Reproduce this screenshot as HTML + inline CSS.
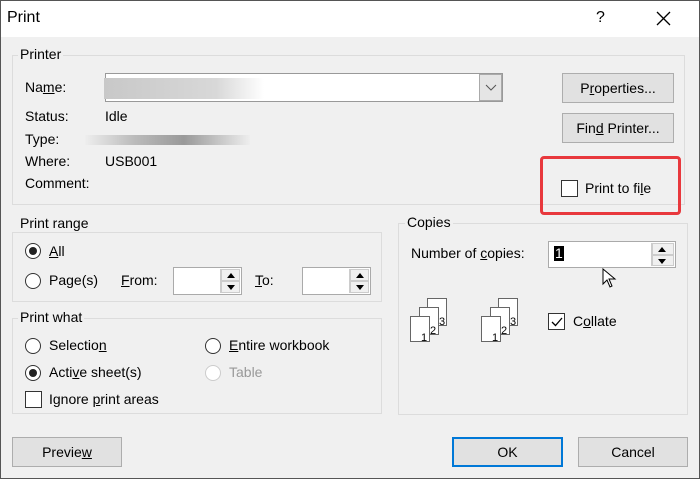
<!DOCTYPE html>
<html><head><style>
*{box-sizing:border-box;margin:0;padding:0}
body{width:700px;height:479px;background:#f0f0f0;font-family:"Liberation Sans",sans-serif;font-size:14px;color:#000;position:relative;overflow:hidden}
.a{position:absolute;white-space:nowrap}
.frame{position:absolute;left:0;top:0;width:700px;height:479px;border:1px solid #555}
.title{position:absolute;left:1px;top:1px;width:698px;height:36px;background:#fff}
.grp{position:absolute;border:1px solid #dcdcdc}
.gl{position:absolute;background:#f0f0f0;padding:0 2px}
.btn{position:absolute;background:#e1e1e1;border:1px solid #adadad;text-align:center;line-height:28px}
.rad{position:absolute;width:16px;height:16px;border:1px solid #333;border-radius:50%;background:#fff}
.rad.on::after{content:"";position:absolute;left:3px;top:3px;width:8px;height:8px;border-radius:50%;background:#222}
.chk{position:absolute;width:17px;height:17px;border:1px solid #333;background:#fff}
.inp{position:absolute;background:#fff;border:1px solid #7a7a7a}
.spin{position:absolute;right:1px;top:1px;bottom:1px;width:20px;border-left:1px solid #ccc;background:#f0f0f0}
.spin div{height:50%;border:1px solid #ccc;position:relative}
.spin .u::after{content:"";position:absolute;left:5px;top:3px;border:4px solid transparent;border-bottom:5px solid #000;border-top:0}
.spin .d::after{content:"";position:absolute;left:5px;top:3px;border:4px solid transparent;border-top:5px solid #000;border-bottom:0}
u{text-decoration:underline}
</style></head><body>
<div class="frame"></div>
<div class="title"></div>
<div class="a" style="left:7px;top:9px;font-size:16px">Print</div>
<div class="a" style="left:596px;top:9px;font-size:16px">?</div>
<svg class="a" style="left:656px;top:11px" width="15" height="15"><path d="M1 1L14 14M14 1L1 14" stroke="#000" stroke-width="1.3"/></svg>

<div class="grp" style="left:12px;top:55px;width:673px;height:150px"></div>
<div class="gl" style="left:18px;top:46px">Printer</div>
<div class="a" style="left:25px;top:79px">Na<u>m</u>e:</div>
<div class="inp" style="left:105px;top:73px;width:398px;height:29px;border-color:#999"></div>
<div class="a" style="left:104px;top:78px;width:160px;height:21px;background:linear-gradient(90deg,#c8c8c8,#d8d8d8 70%,#fff)"></div>
<div class="a" style="left:479px;top:74px;width:23px;height:27px;background:#e5e5e5;border:1px solid #aaa"></div>
<svg class="a" style="left:485px;top:84px" width="12" height="8"><path d="M1 1L6 6L11 1" stroke="#555" fill="none"/></svg>
<div class="a" style="left:25px;top:108px">Status:</div><div class="a" style="left:105px;top:108px">Idle</div>
<div class="a" style="left:25px;top:131px">Type:</div>
<div class="a" style="left:85px;top:135px;width:165px;height:10px;background:linear-gradient(90deg,#eee,#bbb 30%,#999 60%,#eee)"></div>
<div class="a" style="left:25px;top:153px">Where:</div><div class="a" style="left:105px;top:153px">USB001</div>
<div class="a" style="left:25px;top:175px">Comment:</div>
<div class="btn" style="left:562px;top:73px;width:112px;height:30px">P<u>r</u>operties...</div>
<div class="btn" style="left:562px;top:113px;width:112px;height:30px">Fin<u>d</u> Printer...</div>
<div class="a" style="left:540px;top:156px;width:141px;height:59px;border:3px solid #e8383d;border-radius:4px"></div>
<div class="chk" style="left:561px;top:180px"></div>
<div class="a" style="left:585px;top:180px">Print to fi<u>l</u>e</div>

<div class="grp" style="left:12px;top:232px;width:370px;height:70px"></div>
<div class="gl" style="left:18px;top:215px">Print range</div>
<div class="rad on" style="left:25px;top:243px"></div><div class="a" style="left:49px;top:243px"><u>A</u>ll</div>
<div class="rad" style="left:25px;top:273px"></div><div class="a" style="left:49px;top:272px">Pa<u>g</u>e(s)</div>
<div class="a" style="left:121px;top:272px"><u>F</u>rom:</div>
<div class="inp" style="left:173px;top:267px;width:69px;height:28px;border-color:#aaa"><div class="spin"><div class="u"></div><div class="d"></div></div></div>
<div class="a" style="left:255px;top:272px"><u>T</u>o:</div>
<div class="inp" style="left:302px;top:267px;width:69px;height:28px;border-color:#aaa"><div class="spin"><div class="u"></div><div class="d"></div></div></div>

<div class="grp" style="left:12px;top:318px;width:370px;height:96px"></div>
<div class="gl" style="left:18px;top:309px">Print what</div>
<div class="rad" style="left:25px;top:338px"></div><div class="a" style="left:49px;top:337px">Selectio<u>n</u></div>
<div class="rad on" style="left:25px;top:365px"></div><div class="a" style="left:49px;top:364px">Acti<u>v</u>e sheet(s)</div>
<div class="chk" style="left:25px;top:391px"></div><div class="a" style="left:49px;top:391px">Ignore <u>p</u>rint areas</div>
<div class="rad" style="left:205px;top:338px"></div><div class="a" style="left:229px;top:337px"><u>E</u>ntire workbook</div>
<div class="rad" style="left:205px;top:365px;border-color:#ccc"></div><div class="a" style="left:229px;top:364px;color:#999">Table</div>

<div class="grp" style="left:398px;top:223px;width:290px;height:192px"></div>
<div class="gl" style="left:405px;top:214px">Copies</div>
<div class="a" style="left:411px;top:245px">Number of <u>c</u>opies:</div>
<div class="inp" style="left:548px;top:241px;width:128px;height:27px;border-color:#aaa"><span class="a" style="left:5px;top:4px;background:#000;color:#fff;line-height:15px;padding:0 1px">1</span><div class="spin" style="width:23px"><div class="u"></div><div class="d"></div></div></div>
<svg class="a" style="left:602px;top:268px" width="16" height="22"><path d="M1 1L1 16L5 12L8 19L10 18L7 11L13 11Z" fill="#fff" stroke="#000"/></svg>
<svg class="a" style="left:409px;top:297px" width="42" height="48">
<g stroke="#666" fill="#fff">
<rect x="18.5" y="1.5" width="19" height="27"/><rect x="10.5" y="10.5" width="19" height="27"/><rect x="1.5" y="19.5" width="19" height="25"/></g>
<text x="30" y="28" font-family="Liberation Sans" font-size="11">3</text><text x="21" y="37" font-family="Liberation Sans" font-size="11">2</text><text x="12" y="44" font-family="Liberation Sans" font-size="11">1</text></svg>
<svg class="a" style="left:480px;top:297px" width="42" height="48">
<g stroke="#666" fill="#fff">
<rect x="18.5" y="1.5" width="19" height="27"/><rect x="10.5" y="10.5" width="19" height="27"/><rect x="1.5" y="19.5" width="19" height="25"/></g>
<text x="30" y="28" font-family="Liberation Sans" font-size="11">3</text><text x="21" y="37" font-family="Liberation Sans" font-size="11">2</text><text x="12" y="44" font-family="Liberation Sans" font-size="11">1</text></svg>
<div class="chk" style="left:548px;top:313px"></div>
<svg class="a" style="left:550px;top:315px" width="14" height="14"><path d="M2 7L5.5 10.5L12 3" stroke="#000" fill="none" stroke-width="1.3"/></svg>
<div class="a" style="left:573px;top:313px">C<u>o</u>llate</div>

<div class="btn" style="left:12px;top:437px;width:110px;height:30px">Previe<u>w</u></div>
<div class="btn" style="left:452px;top:437px;width:111px;height:30px;border:2px solid #0078d7;line-height:26px">OK</div>
<div class="btn" style="left:578px;top:437px;width:110px;height:30px">Cancel</div>
</body></html>
